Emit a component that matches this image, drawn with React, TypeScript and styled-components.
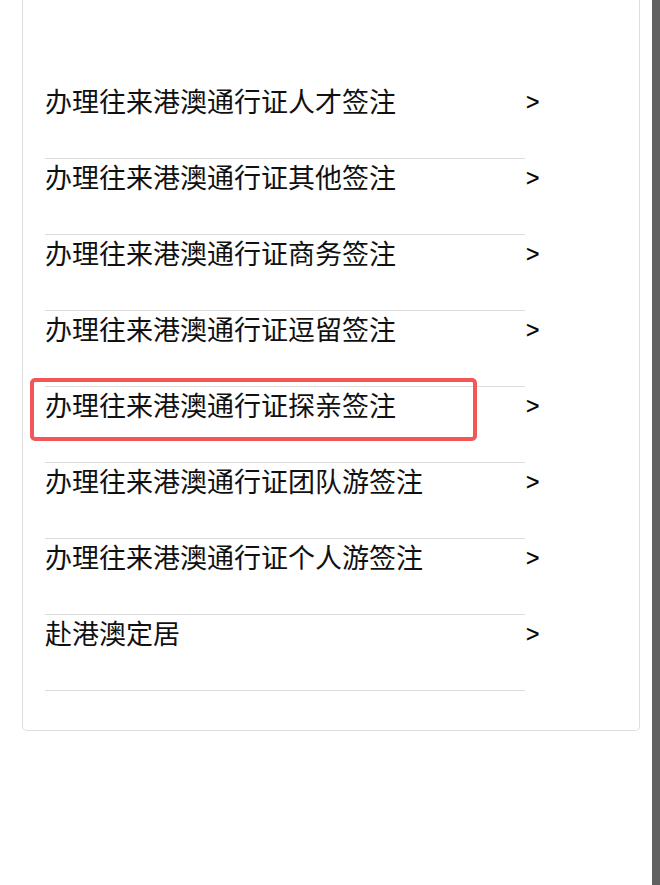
import styled, { createGlobalStyle } from 'styled-components';

const GlobalStyle = createGlobalStyle`
  html, body {
    margin: 0;
    padding: 0;
    background: #ffffff;
  }
  body {
    font-family: "Noto Sans CJK SC", "Noto Sans", sans-serif;
  }
`;

const Page = styled.div`
  display: flex;
  width: 660px;
  height: 885px;
  overflow: hidden;
`;

const Content = styled.div`
  flex: 1;
  padding-left: 22px;
`;

const ScrollTrack = styled.div`
  width: 8px;
  height: 100%;
  background: #616161;
`;

const Card = styled.div`
  width: 618px;
  box-sizing: border-box;
  border: 1px solid #dedede;
  border-top: none;
  border-radius: 0 0 5px 5px;
  padding: 83px 0 39px 22px;
`;

const List = styled.ul`
  list-style: none;
  margin: 0;
  padding: 0;
  display: flex;
  flex-direction: column;
`;

const Row = styled.li`
  position: relative;
  display: flex;
  align-items: flex-start;
`;

const Label = styled.div`
  width: 480px;
  height: 75px;
  border-bottom: 1px solid #dcdcdc;
  font-size: 27px;
  line-height: 36px;
  color: #111111;
`;

const Arrow = styled.span`
  padding: 1px 0 0 1px;
  font-family: "Liberation Sans", Arial, sans-serif;
  font-size: 23px;
  line-height: 36px;
  color: #000000;
  -webkit-text-stroke: 0.3px #000000;
`;

const Highlight = styled.div`
  position: absolute;
  left: -15px;
  top: -9px;
  width: 447px;
  height: 63px;
  box-sizing: border-box;
  border: 4px solid #f25656;
  border-radius: 5px;
  pointer-events: none;
`;

const items = [
  '办理往来港澳通行证人才签注',
  '办理往来港澳通行证其他签注',
  '办理往来港澳通行证商务签注',
  '办理往来港澳通行证逗留签注',
  '办理往来港澳通行证探亲签注',
  '办理往来港澳通行证团队游签注',
  '办理往来港澳通行证个人游签注',
  '赴港澳定居',
];

export default function App() {
  return (
    <>
      <GlobalStyle />
      <Page>
        <Content>
          <Card>
            <List>
              {items.map((text, i) => (
                <Row key={text}>
                  <Label>{text}</Label>
                  <Arrow>&gt;</Arrow>
                  {i === 4 && <Highlight />}
                </Row>
              ))}
            </List>
          </Card>
        </Content>
        <ScrollTrack />
      </Page>
    </>
  );
}
